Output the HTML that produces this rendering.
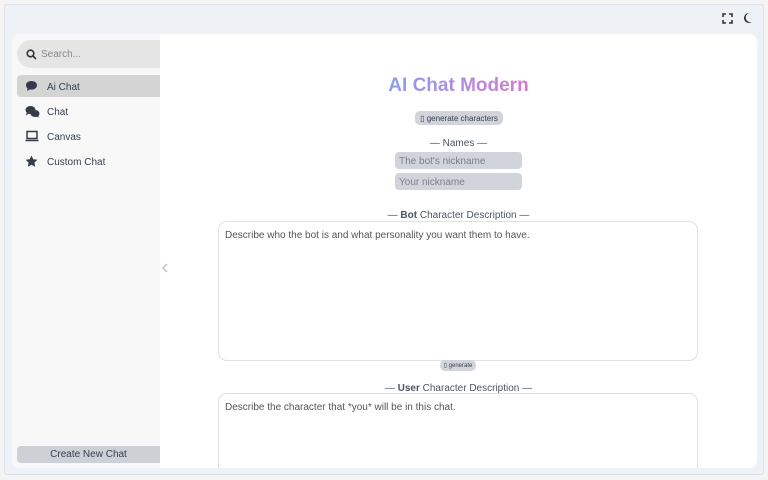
<!DOCTYPE html>
<html><head><meta charset="utf-8"><style>
*{box-sizing:border-box;margin:0;padding:0}
body{width:768px;height:480px;background:#f4f4f5;font-family:"Liberation Sans",sans-serif;position:relative;overflow:hidden;color:#374151}
.frame{position:absolute;left:4px;top:4px;width:760px;height:471px;background:#eef2f7;border:1px solid #dde1e6;border-radius:3px}
.panel{position:absolute;left:12px;top:34px;width:745px;height:434px;background:#fff;border-radius:8px;overflow:hidden}
.side{position:absolute;left:0;top:0;width:148px;height:434px;background:#f8f8f8}
.search{position:absolute;left:5px;top:6px;width:143px;height:28px;background:#e5e5e5;border-radius:14px 0 0 14px;font-size:10px;color:#888;padding:9px 0 0 24px}
.item{position:absolute;left:5px;width:143px;height:22px;font-size:10px;color:#374151;padding:7px 0 0 30px}
.item.act{background:#d4d4d4;border-radius:4px 0 0 4px}
.ic{position:absolute;left:8px;top:5px}
.create{position:absolute;left:5px;top:412px;width:143px;height:17px;background:#cdd0d4;border-radius:4px 0 0 4px;font-size:10px;text-align:center;padding-top:3px;color:#374151}
.main{position:absolute;left:148px;top:0;width:597px;height:434px}
h1{position:absolute;left:0;width:597px;top:41px;text-align:center;font-size:19px;font-weight:bold}
h1 span{background:linear-gradient(90deg,#8aa0f0,#d57ad0);-webkit-background-clip:text;background-clip:text;color:transparent}
.btn{position:absolute;background:#d1d5db;border-radius:5px;font-size:8px;color:#374151;text-align:center}
.lbl{position:absolute;left:0;width:597px;text-align:center;font-size:10px;color:#4b5563}
.inp{position:absolute;left:235px;width:127px;height:17px;background:#d1d5db;border-radius:4px;font-size:10px;color:#7b7f86;padding:4px 0 0 4px}
.ta{position:absolute;left:58px;width:480px;border:1px solid #dde0e4;border-radius:9px;font-size:10px;color:#555;padding:8px 6px}
</style></head><body>
<div class="frame"></div>
<svg style="position:absolute;left:722px;top:13px" width="11" height="11" viewBox="0 0 11 11" fill="none" stroke="#333" stroke-width="1.6"><path d="M1 4V1h3M7 1h3v3M10 7v3H7M4 10H1V7"/></svg>
<svg style="position:absolute;left:742px;top:12px" width="11" height="12" viewBox="0 0 11 12"><path d="M7 1A5 5 0 1 0 10 10A4.5 4.5 0 0 1 7 1Z" fill="#2d3340"/></svg>
<div class="panel">
<div class="side">
<div class="search"><svg style="position:absolute;left:9px;top:9px" width="11" height="11" viewBox="0 0 11 11" fill="none" stroke="#333" stroke-width="1.6"><circle cx="4.5" cy="4.5" r="3.3"/><path d="M7 7l3 3"/></svg>Search...</div>
<div class="item act" style="top:41px"><svg class="ic" width="13" height="12" viewBox="0 0 13 12"><path d="M6.5 1C3 1 1 3 1 5.3c0 1.3.6 2.3 1.5 3L2 11l3-1.6c.5.1 1 .2 1.5.2C10 9.6 12 7.6 12 5.3S10 1 6.5 1Z" fill="#333c4a"/></svg>Ai Chat</div>
<div class="item" style="top:66px"><svg class="ic" width="15" height="13" viewBox="0 0 15 13"><ellipse cx="5.5" cy="5" rx="5" ry="4" fill="#333c4a"/><path d="M1.5 8L1 10.5 4 8.5Z" fill="#333c4a"/><ellipse cx="10" cy="8.5" rx="4.5" ry="3.5" fill="#333c4a"/><path d="M13 10.5l1 2-3-1Z" fill="#333c4a"/></svg>Chat</div>
<div class="item" style="top:91px"><svg class="ic" width="14" height="12" viewBox="0 0 14 12" fill="none" stroke="#333c4a" stroke-width="1.5"><rect x="2" y="1.5" width="10" height="7"/><path d="M0.5 10.5h13"/></svg>Canvas</div>
<div class="item" style="top:116px"><svg class="ic" width="13" height="12" viewBox="0 0 13 12"><path d="M6.5 0.5l1.8 3.8 4.1.5-3 2.8.8 4.1-3.7-2-3.7 2 .8-4.1-3-2.8 4.1-.5Z" fill="#333c4a"/></svg>Custom Chat</div>
<div class="create">Create New Chat</div>
</div>
<svg style="position:absolute;left:150px;top:229px" width="6" height="10" viewBox="0 0 6 10" fill="none" stroke="#bbb" stroke-width="1.3"><path d="M5 1L1 5l4 4"/></svg>
<div class="main">
<h1><span>AI Chat Modern</span></h1>
<div class="btn" style="left:255px;top:77px;width:88px;height:14px;padding-top:3px">▯ generate characters</div>
<div class="lbl" style="top:104px">— Names —</div>
<div class="inp" style="top:118px">The bot's nickname</div>
<div class="inp" style="top:139px">Your nickname</div>
<div class="lbl" style="top:176px">— <b>Bot</b> Character Description —</div>
<div class="ta" style="top:187px;height:140px">Describe who the bot is and what personality you want them to have.</div>
<div class="btn" style="left:280px;top:326px;width:36px;height:11px;font-size:6px;padding-top:2px">▯ generate</div>
<div class="lbl" style="top:349px">— <b>User</b> Character Description —</div>
<div class="ta" style="top:359px;height:90px">Describe the character that *you* will be in this chat.</div>
</div>
</div>
</body></html>
